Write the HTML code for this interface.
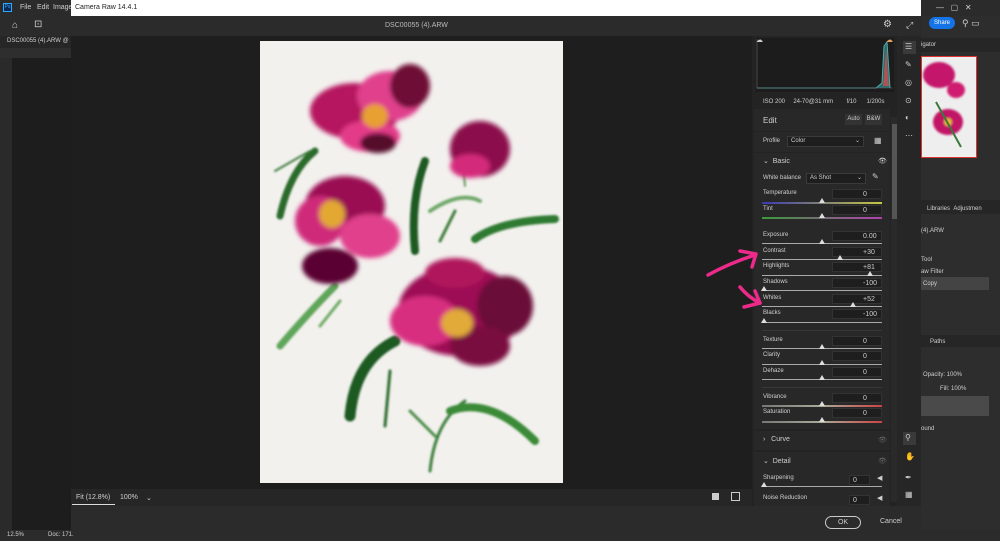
<!DOCTYPE html>
<html><head><meta charset="utf-8"><style>
*{margin:0;padding:0;box-sizing:border-box}
body{width:1000px;height:541px;overflow:hidden;background:#1d1d1d;font-family:"Liberation Sans",sans-serif;color:#ccc;position:relative}
.a{position:absolute}
.t{position:absolute;font-size:7px;color:#cfcfcf;white-space:nowrap}
.sl{position:absolute;left:762px;width:120px;height:1px;background:#aaa}
.th{position:absolute;width:0;height:0;border-left:3px solid transparent;border-right:3px solid transparent;border-bottom:5px solid #ddd}
.box{position:absolute;left:832px;width:50px;height:10px;background:#1e1e1e;border:1px solid #333;font-size:7px;color:#ccc;padding-left:30px;line-height:9px}
</style></head><body>
<div class="a" style="left:0;top:0;width:1000px;height:16px;background:#2b2b2b"></div>
<div class="a" style="left:3px;top:3px;width:9px;height:9px;background:#0a2a55;border:1px solid #31a8ff;font-size:5px;color:#31a8ff;line-height:7px;text-align:center">Ps</div>
<div class="t" style="left:20px;top:4px">File</div><div class="t" style="left:37px;top:4px">Edit</div><div class="t" style="left:53px;top:4px">Image</div>
<div class="a" style="left:0;top:16px;width:71px;height:20px;background:#2b2b2b"></div>
<div class="t" style="left:12px;top:20px;font-size:10px">⌂</div><div class="t" style="left:34px;top:19px;font-size:10px">⊡</div>
<div class="a" style="left:0;top:36px;width:71px;height:12px;background:#262626"></div>
<div class="t" style="left:7px;top:38px;font-size:6px">DSC00055 (4).ARW @ 1</div>
<div class="a" style="left:0;top:48px;width:71px;height:10px;background:#2e2e2e"></div>
<div class="a" style="left:0;top:58px;width:12px;height:472px;background:#2a2a2a"></div>
<div class="a" style="left:0;top:530px;width:1000px;height:11px;background:#2b2b2b"></div>
<div class="t" style="left:7px;top:532px;font-size:6px">12.5%</div><div class="t" style="left:48px;top:532px;font-size:6px">Doc: 171.</div>
<div class="a" style="left:921px;top:16px;width:79px;height:514px;background:#2d2d2d"></div>
<div class="t" style="left:936px;top:3px;font-size:8px">—&nbsp;&nbsp;&nbsp;▢&nbsp;&nbsp;&nbsp;✕</div>
<div class="a" style="left:929px;top:17px;width:26px;height:12px;border-radius:6px;background:#1473e6;font-size:6px;color:#fff;text-align:center;line-height:12px">Share</div>
<div class="t" style="left:962px;top:18px;font-size:9px">⚲ ▭</div>
<div class="a" style="left:921px;top:38px;width:79px;height:14px;background:#262626"></div>
<div class="t" style="left:921px;top:42px;font-size:6px">igator</div>
<div class="a" style="left:921px;top:56px;width:56px;height:102px;background:#eee;border:1px solid #d33"></div>
<svg class="a" style="left:921px;top:57px" width="55" height="100"><g filter="url(#b2)"><ellipse cx="18" cy="18" rx="16" ry="13" fill="#c4136a"/><ellipse cx="35" cy="33" rx="9" ry="8" fill="#d01e70"/><ellipse cx="27" cy="65" rx="15" ry="13" fill="#c11465"/><circle cx="27" cy="65" r="4" fill="#e7b535"/></g><path d="M15 45 L40 90" stroke="#3a7a3a" stroke-width="2"/><defs><filter id="b2"><feGaussianBlur stdDeviation="1"/></filter></defs></svg>
<div class="a" style="left:921px;top:200px;width:79px;height:14px;background:#262626"></div>
<div class="t" style="left:927px;top:206px;font-size:6px">Libraries&nbsp;&nbsp;Adjustmen</div>
<div class="t" style="left:921px;top:228px;font-size:6px">(4).ARW</div>
<div class="t" style="left:921px;top:257px;font-size:6px">Tool</div><div class="t" style="left:921px;top:269px;font-size:6px">aw Filter</div>
<div class="a" style="left:921px;top:277px;width:68px;height:13px;background:#444"></div><div class="t" style="left:923px;top:281px;font-size:6px">Copy</div>
<div class="a" style="left:921px;top:335px;width:79px;height:12px;background:#262626"></div><div class="t" style="left:930px;top:339px;font-size:6px">Paths</div>
<div class="t" style="left:923px;top:372px;font-size:6px">Opacity: 100%</div><div class="t" style="left:940px;top:386px;font-size:6px">Fill: 100%</div>
<div class="a" style="left:921px;top:396px;width:68px;height:20px;background:#4a4a4a"></div>
<div class="t" style="left:921px;top:426px;font-size:6px">ound</div>
<div class="a" style="left:71px;top:0;width:850px;height:16px;background:#fff"></div>
<div class="t" style="left:75px;top:4px;color:#222">Camera Raw 14.4.1</div>
<div class="a" style="left:71px;top:16px;width:850px;height:20px;background:#2b2b2b"></div>
<div class="t" style="left:385px;top:22px;color:#bbb">DSC00055 (4).ARW</div>
<div class="t" style="left:883px;top:19px;font-size:10px">⚙</div><div class="t" style="left:906px;top:20px;font-size:9px">⤢</div>
<div class="a" style="left:71px;top:36px;width:681px;height:453px;background:#1e1e1e"></div>
<div class="a" style="left:71px;top:489px;width:681px;height:17px;background:#262626"></div>
<div class="t" style="left:76px;top:494px">Fit (12.8%)</div><div class="a" style="left:72px;top:504px;width:43px;height:1px;background:#ddd"></div>
<div class="t" style="left:120px;top:494px">100%</div><div class="t" style="left:146px;top:494px">⌄</div>
<div class="a" style="left:712px;top:493px;width:7px;height:7px;background:#ccc"></div><div class="a" style="left:731px;top:492px;width:9px;height:9px;border:1px solid #ccc"></div>
<div class="a" style="left:71px;top:506px;width:850px;height:24px;background:#2b2b2b"></div>
<div class="a" style="left:825px;top:516px;width:36px;height:13px;border:1px solid #ccc;border-radius:7px;font-size:7px;text-align:center;line-height:11px">OK</div>
<div class="t" style="left:880px;top:518px">Cancel</div>
<svg class="a" style="left:260px;top:41px" width="303" height="442" viewBox="0 0 303 442">
<defs><filter id="bl" x="-20%" y="-20%" width="140%" height="140%"><feGaussianBlur stdDeviation="2.5"/></filter><filter id="bs"><feGaussianBlur stdDeviation="1"/></filter></defs>
<rect width="303" height="442" fill="#f3f1ee"/>
<g fill="none" stroke-linecap="round" filter="url(#bs)">
<path d="M20 175 Q30 130 55 110" stroke="#2a6a2c" stroke-width="7"/>
<path d="M15 130 L50 110" stroke="#3a7a3a" stroke-width="2"/>
<path d="M155 210 Q150 160 165 120" stroke="#1f5a24" stroke-width="8"/>
<path d="M170 170 Q200 150 220 160" stroke="#6fa86a" stroke-width="4"/>
<path d="M215 198 Q240 180 295 178" stroke="#2f7a30" stroke-width="8"/>
<path d="M180 200 L195 170" stroke="#3a7a35" stroke-width="3"/>
<path d="M20 305 Q50 270 75 245" stroke="#5fa55a" stroke-width="7"/>
<path d="M60 285 L80 260" stroke="#6aa860" stroke-width="3"/>
<path d="M90 375 Q95 320 135 300" stroke="#1c5a22" stroke-width="11"/>
<path d="M125 385 L130 330" stroke="#2a6a2c" stroke-width="3"/>
<path d="M170 430 Q175 380 205 360" stroke="#3b7f3a" stroke-width="3"/>
<path d="M190 370 Q230 355 275 400" stroke="#3a8a38" stroke-width="8"/>
<path d="M150 370 L175 395" stroke="#4a8a46" stroke-width="3"/>
<path d="M200 90 L205 145" stroke="#5f9a5a" stroke-width="2"/>
</g>
<g filter="url(#bl)">
<ellipse cx="95" cy="70" rx="45" ry="28" fill="#b5125e"/><ellipse cx="130" cy="55" rx="33" ry="25" fill="#e0408c"/>
<ellipse cx="150" cy="45" rx="20" ry="22" fill="#6e0a35"/><ellipse cx="110" cy="95" rx="30" ry="16" fill="#e33a88"/>
<ellipse cx="118" cy="102" rx="18" ry="10" fill="#55072c"/>
<ellipse cx="115" cy="75" rx="13" ry="12" fill="#e8a030"/>
<ellipse cx="85" cy="165" rx="40" ry="30" fill="#9a0e52"/><ellipse cx="60" cy="180" rx="25" ry="25" fill="#cf2a7a"/>
<ellipse cx="110" cy="195" rx="30" ry="22" fill="#e0408c"/><ellipse cx="70" cy="225" rx="28" ry="18" fill="#5a0630"/>
<ellipse cx="72" cy="173" rx="13" ry="14" fill="#e2a832"/>
<ellipse cx="220" cy="108" rx="30" ry="28" fill="#8c0c4c"/><ellipse cx="210" cy="125" rx="20" ry="12" fill="#d42b7c"/>
<ellipse cx="200" cy="270" rx="62" ry="45" fill="#9c0d54"/><ellipse cx="165" cy="280" rx="35" ry="25" fill="#d82e80"/>
<ellipse cx="245" cy="265" rx="28" ry="30" fill="#6a0a38"/><ellipse cx="220" cy="305" rx="30" ry="20" fill="#7a0b40"/>
<ellipse cx="195" cy="232" rx="30" ry="15" fill="#b0125c"/>
<ellipse cx="197" cy="282" rx="16" ry="14" fill="#e2aa38"/>
</g>
</svg>
<div class="a" style="left:752px;top:36px;width:145px;height:470px;background:#232323"></div>
<svg class="a" style="left:756px;top:38px" width="138" height="58"><rect width="138" height="54" fill="#1c1c1c"/><path d="M1 50 L120 50 L126 45 L128 8 L131 4 L134 50" fill="#2a6a6a" stroke="#5aa" stroke-width="1"/><path d="M127 48 L130 10 L133 48Z" fill="#a55"/><path d="M1 1 L1 50 L137 50" fill="none" stroke="#666" stroke-width="0.6"/></svg>
<div class="t" style="left:756px;top:36px;font-size:7px">☁</div><div class="t" style="left:886px;top:36px;font-size:7px;color:#e9a060">☁</div>
<div class="t" style="left:763px;top:99px;font-size:6px">ISO 200&nbsp;&nbsp;&nbsp;&nbsp;&nbsp;24-70@31 mm&nbsp;&nbsp;&nbsp;&nbsp;&nbsp;&nbsp;&nbsp;&nbsp;f/10&nbsp;&nbsp;&nbsp;&nbsp;&nbsp;&nbsp;1/200s</div>
<div class="a" style="left:754px;top:109px;width:136px;height:22px;background:#282828"></div>
<div class="t" style="left:763px;top:116px;font-size:8px">Edit</div>
<div class="a" style="left:845px;top:114px;width:17px;height:11px;background:#333;font-size:6px;text-align:center;line-height:11px">Auto</div>
<div class="a" style="left:865px;top:114px;width:17px;height:11px;background:#333;font-size:6px;text-align:center;line-height:11px">B&amp;W</div>
<div class="a" style="left:754px;top:132px;width:136px;height:20px;background:#282828"></div>
<div class="t" style="left:763px;top:138px;font-size:6px">Profile</div>
<div class="a" style="left:787px;top:136px;width:77px;height:11px;background:#1e1e1e;border:1px solid #3a3a3a;font-size:6px;padding-left:3px;line-height:9px">Color<span style="float:right;padding-right:3px">⌄</span></div>
<div class="t" style="left:874px;top:136px;font-size:8px">▦</div>
<div class="a" style="left:754px;top:153px;width:136px;height:276px;background:#282828"></div>
<div class="t" style="left:763px;top:157px;font-size:7px">⌄&nbsp;&nbsp;Basic</div><div class="t" style="left:878px;top:157px;font-size:7px">👁</div>
<div class="t" style="left:763px;top:175px;font-size:6px">White balance</div>
<div class="a" style="left:806px;top:173px;width:60px;height:11px;background:#1e1e1e;border:1px solid #3a3a3a;font-size:6px;padding-left:3px;line-height:9px">As Shot<span style="float:right;padding-right:3px">⌄</span></div>
<div class="t" style="left:872px;top:172px;font-size:8px">✎</div>
<div class="t" style="left:763px;top:190px;font-size:6px">Temperature</div><div class="box" style="top:189px">0</div><div class="sl" style="top:202px;height:2px;background:linear-gradient(90deg,#3a3ab0,#c8c840)"></div><div class="th" style="left:819px;top:198px"></div>
<div class="t" style="left:763px;top:206px;font-size:6px">Tint</div><div class="box" style="top:205px">0</div><div class="sl" style="top:217px;height:2px;background:linear-gradient(90deg,#3a9a3a,#b040b0)"></div><div class="th" style="left:819px;top:213px"></div>
<div class="t" style="left:763px;top:232px;font-size:6px">Exposure</div><div class="box" style="top:231px">0.00</div><div class="sl" style="top:243px"></div><div class="th" style="left:819px;top:239px"></div>
<div class="t" style="left:763px;top:248px;font-size:6px">Contrast</div><div class="box" style="top:247px">+30</div><div class="sl" style="top:259px"></div><div class="th" style="left:837px;top:255px"></div>
<div class="t" style="left:763px;top:263px;font-size:6px">Highlights</div><div class="box" style="top:262px">+81</div><div class="sl" style="top:275px"></div><div class="th" style="left:867px;top:271px"></div>
<div class="t" style="left:763px;top:279px;font-size:6px">Shadows</div><div class="box" style="top:278px">-100</div><div class="sl" style="top:290px"></div><div class="th" style="left:761px;top:286px"></div>
<div class="t" style="left:763px;top:295px;font-size:6px">Whites</div><div class="box" style="top:294px">+52</div><div class="sl" style="top:306px"></div><div class="th" style="left:850px;top:302px"></div>
<div class="t" style="left:763px;top:310px;font-size:6px">Blacks</div><div class="box" style="top:309px">-100</div><div class="sl" style="top:322px"></div><div class="th" style="left:761px;top:318px"></div>
<div class="a" style="left:762px;top:330px;width:120px;height:1px;background:#383838"></div>
<div class="t" style="left:763px;top:337px;font-size:6px">Texture</div><div class="box" style="top:336px">0</div><div class="sl" style="top:348px"></div><div class="th" style="left:819px;top:344px"></div>
<div class="t" style="left:763px;top:352px;font-size:6px">Clarity</div><div class="box" style="top:351px">0</div><div class="sl" style="top:364px"></div><div class="th" style="left:819px;top:360px"></div>
<div class="t" style="left:763px;top:368px;font-size:6px">Dehaze</div><div class="box" style="top:367px">0</div><div class="sl" style="top:379px"></div><div class="th" style="left:819px;top:375px"></div>
<div class="a" style="left:762px;top:387px;width:120px;height:1px;background:#383838"></div>
<div class="t" style="left:763px;top:394px;font-size:6px">Vibrance</div><div class="box" style="top:393px">0</div><div class="sl" style="top:405px;height:2px;background:linear-gradient(90deg,#777,#aa9,#c44)"></div><div class="th" style="left:819px;top:401px"></div>
<div class="t" style="left:763px;top:409px;font-size:6px">Saturation</div><div class="box" style="top:408px">0</div><div class="sl" style="top:421px;height:2px;background:linear-gradient(90deg,#777,#aa9,#c44)"></div><div class="th" style="left:819px;top:417px"></div>
<div class="a" style="left:754px;top:431px;width:136px;height:19px;background:#282828"></div>
<div class="t" style="left:763px;top:436px;font-size:7px">›&nbsp;&nbsp;&nbsp;Curve</div><div class="t" style="left:878px;top:436px;font-size:7px;color:#666">👁</div>
<div class="a" style="left:754px;top:452px;width:136px;height:54px;background:#282828"></div>
<div class="t" style="left:763px;top:457px;font-size:7px">⌄&nbsp;&nbsp;Detail</div><div class="t" style="left:878px;top:457px;font-size:7px;color:#666">👁</div>
<div class="t" style="left:763px;top:475px;font-size:6px">Sharpening</div><div class="box" style="top:475px;left:849px;width:21px;padding-left:3px">0</div><div class="t" style="left:877px;top:474px">◀</div><div class="sl" style="top:486px"></div><div class="th" style="left:761px;top:482px"></div>
<div class="t" style="left:763px;top:495px;font-size:6px">Noise Reduction</div><div class="box" style="top:495px;left:849px;width:21px;padding-left:3px">0</div><div class="t" style="left:877px;top:494px">◀</div>
<div class="a" style="left:891px;top:117px;width:6px;height:385px;background:#2a2a2a"></div>
<div class="a" style="left:892px;top:124px;width:5px;height:95px;background:#555"></div>
<div class="a" style="left:897px;top:36px;width:24px;height:470px;background:#262626"></div>
<div class="a" style="left:903px;top:41px;width:13px;height:13px;background:#3a3a3a"></div>
<div class="t" style="left:905px;top:42px;font-size:8px">☰</div>
<div class="t" style="left:905px;top:60px;font-size:8px">✎</div>
<div class="t" style="left:905px;top:78px;font-size:8px">◎</div>
<div class="t" style="left:905px;top:96px;font-size:8px">⊙</div>
<div class="t" style="left:905px;top:113px;font-size:8px">◐</div>
<div class="t" style="left:905px;top:131px;font-size:8px">⋯</div>
<div class="a" style="left:903px;top:432px;width:13px;height:13px;background:#3a3a3a"></div>
<div class="t" style="left:905px;top:433px;font-size:8px">⚲</div>
<div class="t" style="left:905px;top:452px;font-size:8px">✋</div>
<div class="t" style="left:905px;top:473px;font-size:8px">✒</div>
<div class="t" style="left:905px;top:490px;font-size:8px">▦</div>
<svg class="a" style="left:700px;top:245px" width="70" height="70" fill="none" stroke="#ec2a8a" stroke-width="3.5" stroke-linecap="round" stroke-linejoin="round">
<path d="M8 30 Q30 18 55 10"/><path d="M40 6 L56 9 L52 22"/>
<path d="M40 42 Q48 52 60 58"/><path d="M44 62 L60 58 L55 46"/>
</svg>
</body></html>
